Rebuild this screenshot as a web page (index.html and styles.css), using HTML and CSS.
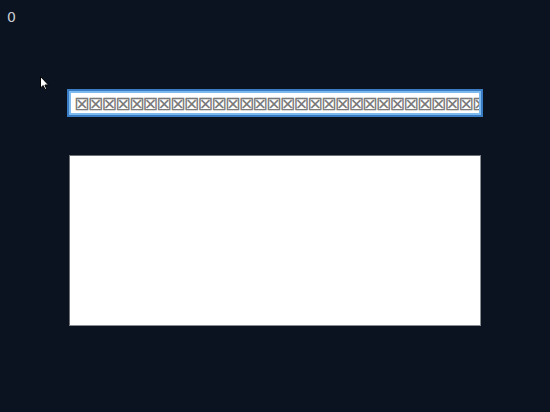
FILE: index.html
```html
<!DOCTYPE html>
<html>
<head>
<meta charset="utf-8">
<link rel="stylesheet" href="styles.css">
</head>
<body>
<div class="counter">0</div>
<main class="form">
  <div class="field">
    <input class="text-input" type="text" value="⊠⊠⊠⊠⊠⊠⊠⊠⊠⊠⊠⊠⊠⊠⊠⊠⊠⊠⊠⊠⊠⊠⊠⊠⊠⊠⊠⊠⊠⊠">
  </div>
  <textarea class="text-area"></textarea>
</main>
<svg class="pointer" width="10" height="16" viewBox="0 0 10 16"><path d="M0.5 0.5 L0.5 12 L3.2 9.5 L5 13.5 L6.6 12.8 L4.9 9 L8.5 9 Z" fill="#fff" stroke="#000" stroke-width="1"/></svg>
</body>
</html>
```
FILE: styles.css
```css
html, body {
  margin: 0;
  padding: 0;
  background: #0c1320;
  width: 550px;
  height: 412px;
  overflow: hidden;
  font-family: "DejaVu Sans", "Liberation Sans", sans-serif;
}
.counter {
  color: #c9ced6;
  font-size: 14px;
  line-height: 14px;
  padding: 10px 0 0 7px;
  height: 14px;
}
.form {
  display: flex;
  flex-direction: column;
  padding: 67px 0 0 69px;
  gap: 40px;
}
.field {
  display: flex;
}
.text-input {
  box-sizing: border-box;
  width: 412px;
  height: 24px;
  margin: 0;
  border: 2px solid #7dbaf0;
  outline: 2px solid #3a7cc4;
  background: #fff;
  color: #7a7a7a;
  font-family: "DejaVu Sans", sans-serif;
  font-size: 19px;
  letter-spacing: -2.2px;
  padding: 0 0 0 3px;
}
.text-area {
  box-sizing: border-box;
  width: 412px;
  height: 171px;
  margin: 0;
  border: 1px solid #8a8d92;
  border-top-color: #6c6f74;
  border-left-color: #6c6f74;
  background: #fff;
  resize: none;
  padding: 0;
}
.pointer {
  position: absolute;
  left: 40px;
  top: 76px;
}
```
